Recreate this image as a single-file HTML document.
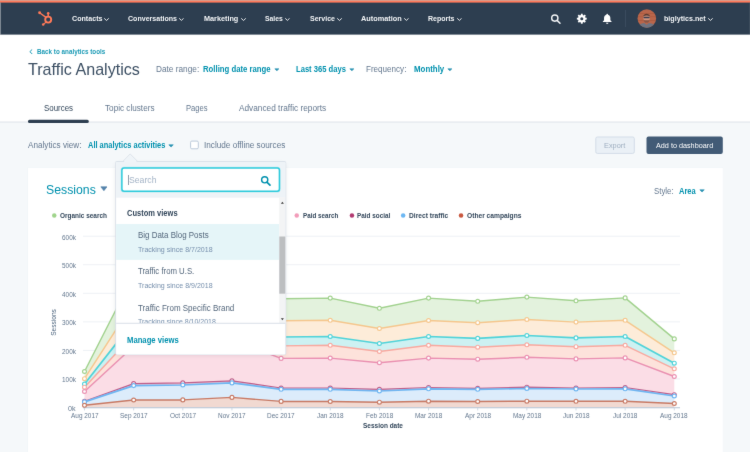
<!DOCTYPE html>
<html><head><meta charset="utf-8"><title>Traffic Analytics</title>
<style>
html,body{margin:0;padding:0;width:750px;height:452px;overflow:hidden}
body{width:750px;height:452px;overflow:hidden;background:#f5f8fa;position:relative;font-family:"Liberation Sans",sans-serif}
#clip{position:absolute;left:0;top:0;width:750px;height:452px;overflow:hidden}
#w{position:absolute;left:-20px;top:-20px;width:790px;height:492px;overflow:hidden;filter:url(#soft)}
#c{position:absolute;left:20px;top:20px;width:750px;height:452px}
.abs{position:absolute;display:block}
.t{position:absolute;white-space:nowrap;line-height:1;transform-origin:0 50%;display:block}
</style></head>
<body>
<svg width="0" height="0" style="position:absolute"><defs><filter id="soft" x="0" y="0" width="100%" height="100%" color-interpolation-filters="sRGB"><feConvolveMatrix order="3" preserveAlpha="true" edgeMode="duplicate" kernelMatrix="0.00524 0.06192 0.00524 0.06192 0.73137 0.06192 0.00524 0.06192 0.00524"/></filter></defs></svg>
<div id="clip"><div id="w"><div id="c">
<svg class="abs" style="left:-20px;top:-20px" width="790" height="492" viewBox="-20 -20 790 492">
<rect x="-20" y="-20" width="790" height="492" fill="#f5f8fa"/>
<rect x="-20" y="34" width="790" height="87.7" fill="#fff"/>
<rect x="-20" y="121.5" width="790" height="1.1" fill="#e1e6ec"/>
<rect x="-20" y="-20" width="790" height="54.6" fill="#2d3e50"/>
<rect x="-20" y="-20" width="790" height="22.6" fill="#ff7a5c"/>
<rect x="-20" y="-20" width="790" height="21" fill="#d89a88"/>
<rect x="0" y="2.6" width="1" height="32" fill="#fff" opacity="0.42"/>
<rect x="749" y="2.6" width="1" height="32" fill="#fff" opacity="0.08"/>
<rect x="27.6" y="167.5" width="695.3" height="290" fill="#eef2f6"/>
<rect x="28" y="167.8" width="694.8" height="290" fill="#fff"/>
<rect x="28" y="119.85" width="60.8" height="3.2" rx="1.5" fill="#2d3e50"/>
<rect x="595.8" y="137" width="38.5" height="16.4" rx="1.6" fill="#eaf0f6" stroke="#d3dde8" stroke-width="1"/>
<rect x="646.5" y="136.5" width="76.3" height="17.4" rx="2" fill="#425b76"/>
<rect x="190.6" y="141.1" width="7.7" height="7.7" rx="1.2" fill="#fff" stroke="#b5c4d6" stroke-width="0.9"/>
</svg>
<svg class="abs" style="left:34px;top:8px" width="24" height="22" viewBox="34 8 24 22">
<g stroke="#ff7a59" fill="none" stroke-linecap="round">
<circle cx="48.2" cy="19.6" r="3.0" stroke-width="1.9"/>
<path d="M48.2 16.4V13.6" stroke-width="1.5"/>
<path d="M46 17.4L39.9 13" stroke-width="1.35"/>
<path d="M46.2 22L43.4 24.4" stroke-width="1.1"/>
</g>
<circle cx="48.2" cy="13.2" r="1.25" fill="#ff7a59"/>
<circle cx="39.6" cy="12.8" r="1.45" fill="#ff7a59"/>
<circle cx="43.2" cy="24.6" r="1.25" fill="#ff7a59"/>
</svg>
<span class="t" style="left:71.68px;top:14.78px;font-size:8.00px;color:#f3f5f7;font-weight:bold;transform:scaleX(0.8905);">Contacts</span>
<svg class="abs" style="left:103.50px;top:17.65px" width="5.00" height="3.30" viewBox="0 0 5.00 3.30"><path d="M0.5 0.6L2.50 2.50L4.50 0.6" fill="none" stroke="#ffffff" stroke-width="0.90" stroke-linecap="round" stroke-linejoin="round"/></svg>
<span class="t" style="left:128.18px;top:14.78px;font-size:8.00px;color:#f3f5f7;font-weight:bold;transform:scaleX(0.8814);">Conversations</span>
<svg class="abs" style="left:179.00px;top:17.70px" width="4.80" height="3.21" viewBox="0 0 4.80 3.21"><path d="M0.5 0.6L2.40 2.41L4.30 0.6" fill="none" stroke="#ffffff" stroke-width="0.90" stroke-linecap="round" stroke-linejoin="round"/></svg>
<span class="t" style="left:203.88px;top:14.78px;font-size:8.00px;color:#f3f5f7;font-weight:bold;transform:scaleX(0.9072);">Marketing</span>
<svg class="abs" style="left:240.50px;top:17.65px" width="5.00" height="3.30" viewBox="0 0 5.00 3.30"><path d="M0.5 0.6L2.50 2.50L4.50 0.6" fill="none" stroke="#ffffff" stroke-width="0.90" stroke-linecap="round" stroke-linejoin="round"/></svg>
<span class="t" style="left:265.38px;top:14.78px;font-size:8.00px;color:#f3f5f7;font-weight:bold;transform:scaleX(0.8504);">Sales</span>
<svg class="abs" style="left:285.10px;top:17.70px" width="4.80" height="3.20" viewBox="0 0 4.80 3.20"><path d="M0.5 0.6L2.40 2.40L4.30 0.6" fill="none" stroke="#ffffff" stroke-width="0.90" stroke-linecap="round" stroke-linejoin="round"/></svg>
<span class="t" style="left:309.68px;top:14.78px;font-size:8.00px;color:#f3f5f7;font-weight:bold;transform:scaleX(0.8774);">Service</span>
<svg class="abs" style="left:336.50px;top:17.65px" width="5.00" height="3.30" viewBox="0 0 5.00 3.30"><path d="M0.5 0.6L2.50 2.50L4.50 0.6" fill="none" stroke="#ffffff" stroke-width="0.90" stroke-linecap="round" stroke-linejoin="round"/></svg>
<span class="t" style="left:360.98px;top:14.78px;font-size:8.00px;color:#f3f5f7;font-weight:bold;transform:scaleX(0.9154);">Automation</span>
<svg class="abs" style="left:404.00px;top:17.70px" width="4.80" height="3.21" viewBox="0 0 4.80 3.21"><path d="M0.5 0.6L2.40 2.41L4.30 0.6" fill="none" stroke="#ffffff" stroke-width="0.90" stroke-linecap="round" stroke-linejoin="round"/></svg>
<span class="t" style="left:428.38px;top:14.78px;font-size:8.00px;color:#f3f5f7;font-weight:bold;transform:scaleX(0.8760);">Reports</span>
<svg class="abs" style="left:457.00px;top:17.70px" width="4.80" height="3.21" viewBox="0 0 4.80 3.21"><path d="M0.5 0.6L2.40 2.41L4.30 0.6" fill="none" stroke="#ffffff" stroke-width="0.90" stroke-linecap="round" stroke-linejoin="round"/></svg>
<span class="t" style="left:664.38px;top:14.78px;font-size:8.00px;color:#f3f5f7;font-weight:bold;transform:scaleX(0.8929);">biglytics.net</span>
<svg class="abs" style="left:707.90px;top:17.67px" width="4.90" height="3.25" viewBox="0 0 4.90 3.25"><path d="M0.5 0.6L2.45 2.45L4.40 0.6" fill="none" stroke="#ffffff" stroke-width="0.90" stroke-linecap="round" stroke-linejoin="round"/></svg>
<svg class="abs" style="left:549px;top:12px" width="15" height="15" viewBox="549 12 15 15">
<circle cx="554.8" cy="18.1" r="3.15" fill="none" stroke="#f1f3f5" stroke-width="1.4"/>
<path d="M557.3 20.6L560.0 23.3" stroke="#f1f3f5" stroke-width="1.5" stroke-linecap="round"/></svg>
<svg class="abs" style="left:575px;top:12px" width="15" height="15" viewBox="575 12 15 15"><path d="M586.73 17.84L586.73 19.56L585.48 19.65L585.07 20.63L585.89 21.58L584.68 22.79L583.73 21.97L582.75 22.38L582.66 23.63L580.94 23.63L580.85 22.38L579.87 21.97L578.92 22.79L577.71 21.58L578.53 20.63L578.12 19.65L576.87 19.56L576.87 17.84L578.12 17.75L578.53 16.77L577.71 15.82L578.92 14.61L579.87 15.43L580.85 15.02L580.94 13.77L582.66 13.77L582.75 15.02L583.73 15.43L584.68 14.61L585.89 15.82L585.07 16.77L585.48 17.75Z M580.25 18.70a1.55 1.55 0 1 0 3.10 0a1.55 1.55 0 1 0 -3.10 0Z" fill="#fff" fill-rule="evenodd"/></svg>
<svg class="abs" style="left:600px;top:11px" width="15" height="16" viewBox="600 11 15 16"><g transform="translate(607.2 18.9) scale(0.93 0.92) translate(-607.2 -18.7)">
<path d="M607.2 13.2c-0.6 0-0.9 0.4-0.9 0.9c-1.7 0.5-2.5 1.9-2.5 3.7v2.3l-1.3 1.5v0.6h9.4v-0.6l-1.3-1.5v-2.3c0-1.8-0.8-3.2-2.5-3.7c0-0.5-0.3-0.9-0.9-0.9z" fill="#fff"/>
<path d="M605.9 22.9h2.6c0 0.8-0.6 1.3-1.3 1.3s-1.3-0.5-1.3-1.3z" fill="#fff"/></g></svg>
<div class="abs" style="left:625.4px;top:10px;width:1px;height:17px;background:#3a4b5e"></div>
<svg class="abs" style="left:637px;top:9px" width="20" height="20" viewBox="637 9 20 20">
<defs><clipPath id="av"><circle cx="646.8" cy="18.5" r="9.3"/></clipPath></defs>
<g clip-path="url(#av)">
<rect x="637" y="9" width="20" height="20" fill="#b9664b"/>
<rect x="637" y="13" width="20" height="0.6" fill="#a9573d"/><rect x="637" y="16.5" width="20" height="0.6" fill="#a9573d"/><rect x="637" y="20" width="20" height="0.6" fill="#a9573d"/>
<ellipse cx="646.6" cy="18.2" rx="3.2" ry="4.2" fill="#cf947e"/>
<path d="M643.3 16.4c0-3.6 6.6-3.6 6.6 0c-1.6-1.2-5-1.2-6.6 0z" fill="#5b3b30"/>
<rect x="643.6" y="16.7" width="6" height="1.6" rx="0.6" fill="#3b3f52"/>
<path d="M643.5 19.4c1.2 1.2 5 1.2 6.2 0c0 4.6-6.2 4.6-6.2 0z" fill="#8b5443"/>
<path d="M637 29v-2.6c2.5-2.6 6-3.2 7.3-3.3l2.3 1.6l2.3-1.6c1.6 0.1 5 0.7 7.6 3.3v2.6z" fill="#6f7482"/>
</g></svg>
<svg class="abs" style="left:29.1px;top:49.2px" width="4" height="6" viewBox="0 0 4 6"><path d="M2.9 0.7L0.9 2.7L2.9 4.7" fill="none" stroke="#0091ae" stroke-width="0.9" stroke-linecap="round" stroke-linejoin="round"/></svg>
<span class="t" style="left:36.71px;top:47.77px;font-size:7.20px;color:#1a9ab5;font-weight:bold;transform:scaleX(0.8770);">Back to analytics tools</span>
<span class="t" style="left:27.84px;top:60.64px;font-size:16.40px;color:#3d5064;transform:scaleX(0.9829);">Traffic Analytics</span>
<span class="t" style="left:155.66px;top:64.80px;font-size:8.60px;color:#64788f;transform:scaleX(0.9616);">Date range:</span>
<span class="t" style="left:203.35px;top:64.59px;font-size:8.80px;color:#0091ae;font-weight:bold;transform:scaleX(0.8810);">Rolling date range</span>
<svg class="abs" style="left:273.55px;top:67.68px" width="5.70" height="3.63" viewBox="273.55 67.68 5.70 3.63"><path d="M274.40 68.53H278.40L276.40 70.47Z" fill="#2d94b3" stroke="#2d94b3" stroke-width="0.7" stroke-linejoin="round"/></svg>
<span class="t" style="left:296.45px;top:64.59px;font-size:8.80px;color:#0091ae;font-weight:bold;transform:scaleX(0.8649);">Last 365 days</span>
<svg class="abs" style="left:348.75px;top:67.68px" width="5.70" height="3.63" viewBox="348.75 67.68 5.70 3.63"><path d="M349.60 68.53H353.60L351.60 70.47Z" fill="#2d94b3" stroke="#2d94b3" stroke-width="0.7" stroke-linejoin="round"/></svg>
<span class="t" style="left:366.06px;top:64.80px;font-size:8.60px;color:#64788f;transform:scaleX(0.9394);">Frequency:</span>
<span class="t" style="left:414.15px;top:64.59px;font-size:8.80px;color:#0091ae;font-weight:bold;transform:scaleX(0.8962);">Monthly</span>
<svg class="abs" style="left:446.85px;top:67.68px" width="5.70" height="3.63" viewBox="446.85 67.68 5.70 3.63"><path d="M447.70 68.53H451.70L449.70 70.47Z" fill="#2d94b3" stroke="#2d94b3" stroke-width="0.7" stroke-linejoin="round"/></svg>
<span class="t" style="left:43.66px;top:104.40px;font-size:8.60px;color:#33475b;transform:scaleX(0.9197);">Sources</span>
<span class="t" style="left:104.66px;top:104.40px;font-size:8.60px;color:#64788f;transform:scaleX(0.9505);">Topic clusters</span>
<span class="t" style="left:185.56px;top:104.40px;font-size:8.60px;color:#64788f;transform:scaleX(0.8864);">Pages</span>
<span class="t" style="left:239.16px;top:104.40px;font-size:8.60px;color:#64788f;transform:scaleX(0.9630);">Advanced traffic reports</span>
<span class="t" style="left:27.67px;top:140.56px;font-size:8.30px;color:#64788f;transform:scaleX(0.9829);">Analytics view:</span>
<span class="t" style="left:87.96px;top:141.41px;font-size:8.40px;color:#0091ae;font-weight:bold;transform:scaleX(0.8888);">All analytics activities</span>
<svg class="abs" style="left:167.75px;top:143.67px" width="6.10" height="3.86" viewBox="167.75 143.67 6.10 3.86"><path d="M168.60 144.52H173.00L170.80 146.68Z" fill="#2d94b3" stroke="#2d94b3" stroke-width="0.7" stroke-linejoin="round"/></svg>
<span class="t" style="left:203.67px;top:141.06px;font-size:8.30px;color:#64788f;transform:scaleX(0.9862);">Include offline sources</span>
<span class="t" style="left:604.40px;top:141.66px;font-size:7.40px;color:#9fafc1;transform:scaleX(0.9933);">Export</span>
<span class="t" style="left:655.80px;top:141.66px;font-size:7.40px;color:#ffffff;transform:scaleX(0.9798);">Add to dashboard</span>
<span class="t" style="left:45.86px;top:182.87px;font-size:13.60px;color:#0091ae;transform:scaleX(0.9027);">Sessions</span>
<svg class="abs" style="left:99.70px;top:186.16px" width="7.80" height="5.49" viewBox="99.70 186.16 7.80 5.49"><path d="M100.55 187.01H106.65L103.60 190.79Z" fill="#5583aa" stroke="#5583aa" stroke-width="0.7" stroke-linejoin="round"/></svg>
<span class="t" style="left:654.46px;top:187.11px;font-size:8.40px;color:#64788f;transform:scaleX(0.9379);">Style:</span>
<span class="t" style="left:679.26px;top:187.11px;font-size:8.40px;color:#0091ae;font-weight:bold;transform:scaleX(0.8996);">Area</span>
<svg class="abs" style="left:698.95px;top:189.47px" width="6.10" height="3.86" viewBox="698.95 189.47 6.10 3.86"><path d="M699.80 190.32H704.20L702.00 192.48Z" fill="#2d94b3" stroke="#2d94b3" stroke-width="0.7" stroke-linejoin="round"/></svg>
<svg class="abs" style="left:50px;top:212px" width="8" height="8" viewBox="50 212 8 8"><circle cx="54.25" cy="215.4" r="2.25" fill="#9fd48b"/></svg>
<span class="t" style="left:59.73px;top:213.44px;font-size:6.70px;color:#33475b;font-weight:bold;transform:scaleX(0.9655);">Organic search</span>
<svg class="abs" style="left:115px;top:212px" width="8" height="8" viewBox="115 212 8 8"><circle cx="119.75" cy="215.4" r="2.25" fill="#f8c889"/></svg>
<span class="t" style="left:125.23px;top:213.44px;font-size:6.70px;color:#33475b;font-weight:bold;transform:scaleX(0.9260);">Referrals</span>
<svg class="abs" style="left:150px;top:212px" width="8" height="8" viewBox="150 212 8 8"><circle cx="154.15" cy="215.4" r="2.25" fill="#5bd0d6"/></svg>
<span class="t" style="left:159.73px;top:213.44px;font-size:6.70px;color:#33475b;font-weight:bold;transform:scaleX(1.0351);">Social media</span>
<svg class="abs" style="left:204px;top:212px" width="8" height="8" viewBox="204 212 8 8"><circle cx="208.15" cy="215.4" r="2.25" fill="#f9a48f"/></svg>
<span class="t" style="left:213.73px;top:213.44px;font-size:6.70px;color:#33475b;font-weight:bold;transform:scaleX(1.0511);">Email marketing</span>
<svg class="abs" style="left:292px;top:212px" width="8" height="8" viewBox="292 212 8 8"><circle cx="296.75" cy="215.4" r="2.25" fill="#f29cb9"/></svg>
<span class="t" style="left:302.63px;top:213.44px;font-size:6.70px;color:#33475b;font-weight:bold;transform:scaleX(0.9411);">Paid search</span>
<svg class="abs" style="left:347px;top:212px" width="8" height="8" viewBox="347 212 8 8"><circle cx="351.95" cy="215.4" r="2.25" fill="#b23a70"/></svg>
<span class="t" style="left:356.73px;top:213.44px;font-size:6.70px;color:#33475b;font-weight:bold;transform:scaleX(0.9513);">Paid social</span>
<svg class="abs" style="left:399px;top:212px" width="8" height="8" viewBox="399 212 8 8"><circle cx="403.15" cy="215.4" r="2.25" fill="#6cb7f3"/></svg>
<span class="t" style="left:408.63px;top:213.44px;font-size:6.70px;color:#33475b;font-weight:bold;transform:scaleX(0.9958);">Direct traffic</span>
<svg class="abs" style="left:456px;top:212px" width="8" height="8" viewBox="456 212 8 8"><circle cx="461.05" cy="215.4" r="2.25" fill="#c9583f"/></svg>
<span class="t" style="left:466.53px;top:213.44px;font-size:6.70px;color:#33475b;font-weight:bold;transform:scaleX(0.9958);">Other campaigns</span>
<svg class="abs" style="left:0;top:225px" width="750" height="200" viewBox="0 225 750 200"><path d="M83 378.95H680" stroke="#eef1f5" stroke-width="1"/><path d="M83 350.40H680" stroke="#eef1f5" stroke-width="1"/><path d="M83 321.85H680" stroke="#eef1f5" stroke-width="1"/><path d="M83 293.30H680" stroke="#eef1f5" stroke-width="1"/><path d="M83 264.75H680" stroke="#eef1f5" stroke-width="1"/><path d="M83 236.20H680" stroke="#eef1f5" stroke-width="1"/><path d="M84.50 371.50L133.65 275.00L182.80 277.00L231.95 274.00L281.10 298.70L330.25 298.10L379.40 308.30L428.55 298.10L477.70 301.30L526.85 297.10L576.00 300.80L625.15 297.90L674.30 338.90L674.30 352.80L625.15 320.30L576.00 322.10L526.85 319.50L477.70 322.70L428.55 320.50L379.40 328.50L330.25 320.30L281.10 320.80L231.95 301.50L182.80 304.00L133.65 302.40L84.50 378.70Z" fill="#e3f2dd"/><path d="M84.50 378.70L133.65 302.40L182.80 304.00L231.95 301.50L281.10 320.80L330.25 320.30L379.40 328.50L428.55 320.50L477.70 322.70L526.85 319.50L576.00 322.10L625.15 320.30L674.30 352.80L674.30 363.20L625.15 336.50L576.00 337.90L526.85 335.50L477.70 338.40L428.55 336.50L379.40 343.50L330.25 336.50L281.10 337.00L231.95 320.80L182.80 322.80L133.65 321.40L84.50 384.00Z" fill="#fdecd9"/><path d="M84.50 384.00L133.65 321.40L182.80 322.80L231.95 320.80L281.10 337.00L330.25 336.50L379.40 343.50L428.55 336.50L477.70 338.40L526.85 335.50L576.00 337.90L625.15 336.50L674.30 363.20L674.30 368.80L625.15 345.30L576.00 346.70L526.85 344.80L477.70 347.20L428.55 345.30L379.40 351.50L330.25 345.30L281.10 345.90L231.95 329.00L182.80 333.00L133.65 334.40L84.50 387.20Z" fill="#cdf1f2"/><path d="M84.50 387.20L133.65 334.40L182.80 333.00L231.95 329.00L281.10 345.90L330.25 345.30L379.40 351.50L428.55 345.30L477.70 347.20L526.85 344.80L576.00 346.70L625.15 345.30L674.30 368.80L674.30 376.50L625.15 357.90L576.00 358.90L526.85 357.30L477.70 359.20L428.55 358.10L379.40 362.70L330.25 358.10L281.10 358.40L231.95 340.00L182.80 344.00L133.65 346.20L84.50 391.50Z" fill="#fde2db"/><path d="M84.50 391.50L133.65 346.20L182.80 344.00L231.95 340.00L281.10 358.40L330.25 358.10L379.40 362.70L428.55 358.10L477.70 359.20L526.85 357.30L576.00 358.90L625.15 357.90L674.30 376.50L674.30 394.70L625.15 387.50L576.00 388.00L526.85 387.20L477.70 388.30L428.55 387.50L379.40 389.30L330.25 388.00L281.10 388.00L231.95 380.80L182.80 382.90L133.65 383.60L84.50 401.20Z" fill="#fbdde6"/><path d="M84.50 401.20L133.65 383.60L182.80 382.90L231.95 380.80L281.10 388.00L330.25 388.00L379.40 389.30L428.55 387.50L477.70 388.30L526.85 387.20L576.00 388.00L625.15 387.50L674.30 394.70L674.30 396.00L625.15 388.80L576.00 389.00L526.85 388.50L477.70 389.30L428.55 388.80L379.40 391.00L330.25 389.30L281.10 389.30L231.95 382.90L182.80 385.00L133.65 385.60L84.50 401.90Z" fill="#e9c8d8"/><path d="M84.50 401.90L133.65 385.60L182.80 385.00L231.95 382.90L281.10 389.30L330.25 389.30L379.40 391.00L428.55 388.80L477.70 389.30L526.85 388.50L576.00 389.00L625.15 388.80L674.30 396.00L674.30 403.50L625.15 401.30L576.00 401.30L526.85 401.20L477.70 401.50L428.55 401.20L379.40 402.20L330.25 401.50L281.10 401.40L231.95 397.40L182.80 399.90L133.65 400.00L84.50 405.30Z" fill="#dcecfb"/><path d="M84.50 405.30L133.65 400.00L182.80 399.90L231.95 397.40L281.10 401.40L330.25 401.50L379.40 402.20L428.55 401.20L477.70 401.50L526.85 401.20L576.00 401.30L625.15 401.30L674.30 403.50L674.30 407.50L625.15 407.50L576.00 407.50L526.85 407.50L477.70 407.50L428.55 407.50L379.40 407.50L330.25 407.50L281.10 407.50L231.95 407.50L182.80 407.50L133.65 407.50L84.50 407.50Z" fill="#f1d9d1"/><path d="M83 407.80H680" stroke="#b3c2d3" stroke-width="1.1"/><path d="M84.50 407.80v2.6" stroke="#c4d0de" stroke-width="0.8"/><path d="M133.65 407.80v2.6" stroke="#c4d0de" stroke-width="0.8"/><path d="M182.80 407.80v2.6" stroke="#c4d0de" stroke-width="0.8"/><path d="M231.95 407.80v2.6" stroke="#c4d0de" stroke-width="0.8"/><path d="M281.10 407.80v2.6" stroke="#c4d0de" stroke-width="0.8"/><path d="M330.25 407.80v2.6" stroke="#c4d0de" stroke-width="0.8"/><path d="M379.40 407.80v2.6" stroke="#c4d0de" stroke-width="0.8"/><path d="M428.55 407.80v2.6" stroke="#c4d0de" stroke-width="0.8"/><path d="M477.70 407.80v2.6" stroke="#c4d0de" stroke-width="0.8"/><path d="M526.85 407.80v2.6" stroke="#c4d0de" stroke-width="0.8"/><path d="M576.00 407.80v2.6" stroke="#c4d0de" stroke-width="0.8"/><path d="M625.15 407.80v2.6" stroke="#c4d0de" stroke-width="0.8"/><path d="M674.30 407.80v2.6" stroke="#c4d0de" stroke-width="0.8"/><path d="M84.50 371.50L133.65 275.00L182.80 277.00L231.95 274.00L281.10 298.70L330.25 298.10L379.40 308.30L428.55 298.10L477.70 301.30L526.85 297.10L576.00 300.80L625.15 297.90L674.30 338.90" fill="none" stroke="#a2d28f" stroke-width="1.45" stroke-linejoin="round"/><path d="M84.50 378.70L133.65 302.40L182.80 304.00L231.95 301.50L281.10 320.80L330.25 320.30L379.40 328.50L428.55 320.50L477.70 322.70L526.85 319.50L576.00 322.10L625.15 320.30L674.30 352.80" fill="none" stroke="#f5c78e" stroke-width="1.45" stroke-linejoin="round"/><path d="M84.50 384.00L133.65 321.40L182.80 322.80L231.95 320.80L281.10 337.00L330.25 336.50L379.40 343.50L428.55 336.50L477.70 338.40L526.85 335.50L576.00 337.90L625.15 336.50L674.30 363.20" fill="none" stroke="#51d3d9" stroke-width="1.75" stroke-linejoin="round"/><path d="M84.50 387.20L133.65 334.40L182.80 333.00L231.95 329.00L281.10 345.90L330.25 345.30L379.40 351.50L428.55 345.30L477.70 347.20L526.85 344.80L576.00 346.70L625.15 345.30L674.30 368.80" fill="none" stroke="#f8a9a0" stroke-width="1.45" stroke-linejoin="round"/><path d="M84.50 391.50L133.65 346.20L182.80 344.00L231.95 340.00L281.10 358.40L330.25 358.10L379.40 362.70L428.55 358.10L477.70 359.20L526.85 357.30L576.00 358.90L625.15 357.90L674.30 376.50" fill="none" stroke="#ea90b1" stroke-width="1.45" stroke-linejoin="round"/><path d="M84.50 401.20L133.65 383.60L182.80 382.90L231.95 380.80L281.10 388.00L330.25 388.00L379.40 389.30L428.55 387.50L477.70 388.30L526.85 387.20L576.00 388.00L625.15 387.50L674.30 394.70" fill="none" stroke="#bf5f8a" stroke-width="1.20" stroke-linejoin="round"/><path d="M84.50 401.90L133.65 385.60L182.80 385.00L231.95 382.90L281.10 389.30L330.25 389.30L379.40 391.00L428.55 388.80L477.70 389.30L526.85 388.50L576.00 389.00L625.15 388.80L674.30 396.00" fill="none" stroke="#6eb6f2" stroke-width="1.70" stroke-linejoin="round"/><path d="M84.50 405.30L133.65 400.00L182.80 399.90L231.95 397.40L281.10 401.40L330.25 401.50L379.40 402.20L428.55 401.20L477.70 401.50L526.85 401.20L576.00 401.30L625.15 401.30L674.30 403.50" fill="none" stroke="#c87a65" stroke-width="1.45" stroke-linejoin="round"/><circle cx="84.50" cy="371.50" r="1.95" fill="#fff" stroke="#a2d28f" stroke-width="1.15"/><circle cx="133.65" cy="275.00" r="1.95" fill="#fff" stroke="#a2d28f" stroke-width="1.15"/><circle cx="182.80" cy="277.00" r="1.95" fill="#fff" stroke="#a2d28f" stroke-width="1.15"/><circle cx="231.95" cy="274.00" r="1.95" fill="#fff" stroke="#a2d28f" stroke-width="1.15"/><circle cx="281.10" cy="298.70" r="1.95" fill="#fff" stroke="#a2d28f" stroke-width="1.15"/><circle cx="330.25" cy="298.10" r="1.95" fill="#fff" stroke="#a2d28f" stroke-width="1.15"/><circle cx="379.40" cy="308.30" r="1.95" fill="#fff" stroke="#a2d28f" stroke-width="1.15"/><circle cx="428.55" cy="298.10" r="1.95" fill="#fff" stroke="#a2d28f" stroke-width="1.15"/><circle cx="477.70" cy="301.30" r="1.95" fill="#fff" stroke="#a2d28f" stroke-width="1.15"/><circle cx="526.85" cy="297.10" r="1.95" fill="#fff" stroke="#a2d28f" stroke-width="1.15"/><circle cx="576.00" cy="300.80" r="1.95" fill="#fff" stroke="#a2d28f" stroke-width="1.15"/><circle cx="625.15" cy="297.90" r="1.95" fill="#fff" stroke="#a2d28f" stroke-width="1.15"/><circle cx="674.30" cy="338.90" r="1.95" fill="#fff" stroke="#a2d28f" stroke-width="1.15"/><circle cx="84.50" cy="378.70" r="1.95" fill="#fff" stroke="#f5c78e" stroke-width="1.15"/><circle cx="133.65" cy="302.40" r="1.95" fill="#fff" stroke="#f5c78e" stroke-width="1.15"/><circle cx="182.80" cy="304.00" r="1.95" fill="#fff" stroke="#f5c78e" stroke-width="1.15"/><circle cx="231.95" cy="301.50" r="1.95" fill="#fff" stroke="#f5c78e" stroke-width="1.15"/><circle cx="281.10" cy="320.80" r="1.95" fill="#fff" stroke="#f5c78e" stroke-width="1.15"/><circle cx="330.25" cy="320.30" r="1.95" fill="#fff" stroke="#f5c78e" stroke-width="1.15"/><circle cx="379.40" cy="328.50" r="1.95" fill="#fff" stroke="#f5c78e" stroke-width="1.15"/><circle cx="428.55" cy="320.50" r="1.95" fill="#fff" stroke="#f5c78e" stroke-width="1.15"/><circle cx="477.70" cy="322.70" r="1.95" fill="#fff" stroke="#f5c78e" stroke-width="1.15"/><circle cx="526.85" cy="319.50" r="1.95" fill="#fff" stroke="#f5c78e" stroke-width="1.15"/><circle cx="576.00" cy="322.10" r="1.95" fill="#fff" stroke="#f5c78e" stroke-width="1.15"/><circle cx="625.15" cy="320.30" r="1.95" fill="#fff" stroke="#f5c78e" stroke-width="1.15"/><circle cx="674.30" cy="352.80" r="1.95" fill="#fff" stroke="#f5c78e" stroke-width="1.15"/><circle cx="84.50" cy="384.00" r="1.95" fill="#fff" stroke="#51d3d9" stroke-width="1.15"/><circle cx="133.65" cy="321.40" r="1.95" fill="#fff" stroke="#51d3d9" stroke-width="1.15"/><circle cx="182.80" cy="322.80" r="1.95" fill="#fff" stroke="#51d3d9" stroke-width="1.15"/><circle cx="231.95" cy="320.80" r="1.95" fill="#fff" stroke="#51d3d9" stroke-width="1.15"/><circle cx="281.10" cy="337.00" r="1.95" fill="#fff" stroke="#51d3d9" stroke-width="1.15"/><circle cx="330.25" cy="336.50" r="1.95" fill="#fff" stroke="#51d3d9" stroke-width="1.15"/><circle cx="379.40" cy="343.50" r="1.95" fill="#fff" stroke="#51d3d9" stroke-width="1.15"/><circle cx="428.55" cy="336.50" r="1.95" fill="#fff" stroke="#51d3d9" stroke-width="1.15"/><circle cx="477.70" cy="338.40" r="1.95" fill="#fff" stroke="#51d3d9" stroke-width="1.15"/><circle cx="526.85" cy="335.50" r="1.95" fill="#fff" stroke="#51d3d9" stroke-width="1.15"/><circle cx="576.00" cy="337.90" r="1.95" fill="#fff" stroke="#51d3d9" stroke-width="1.15"/><circle cx="625.15" cy="336.50" r="1.95" fill="#fff" stroke="#51d3d9" stroke-width="1.15"/><circle cx="674.30" cy="363.20" r="1.95" fill="#fff" stroke="#51d3d9" stroke-width="1.15"/><circle cx="84.50" cy="387.20" r="1.95" fill="#fff" stroke="#f8a9a0" stroke-width="1.15"/><circle cx="133.65" cy="334.40" r="1.95" fill="#fff" stroke="#f8a9a0" stroke-width="1.15"/><circle cx="182.80" cy="333.00" r="1.95" fill="#fff" stroke="#f8a9a0" stroke-width="1.15"/><circle cx="231.95" cy="329.00" r="1.95" fill="#fff" stroke="#f8a9a0" stroke-width="1.15"/><circle cx="281.10" cy="345.90" r="1.95" fill="#fff" stroke="#f8a9a0" stroke-width="1.15"/><circle cx="330.25" cy="345.30" r="1.95" fill="#fff" stroke="#f8a9a0" stroke-width="1.15"/><circle cx="379.40" cy="351.50" r="1.95" fill="#fff" stroke="#f8a9a0" stroke-width="1.15"/><circle cx="428.55" cy="345.30" r="1.95" fill="#fff" stroke="#f8a9a0" stroke-width="1.15"/><circle cx="477.70" cy="347.20" r="1.95" fill="#fff" stroke="#f8a9a0" stroke-width="1.15"/><circle cx="526.85" cy="344.80" r="1.95" fill="#fff" stroke="#f8a9a0" stroke-width="1.15"/><circle cx="576.00" cy="346.70" r="1.95" fill="#fff" stroke="#f8a9a0" stroke-width="1.15"/><circle cx="625.15" cy="345.30" r="1.95" fill="#fff" stroke="#f8a9a0" stroke-width="1.15"/><circle cx="674.30" cy="368.80" r="1.95" fill="#fff" stroke="#f8a9a0" stroke-width="1.15"/><circle cx="84.50" cy="391.50" r="1.95" fill="#fff" stroke="#ea90b1" stroke-width="1.15"/><circle cx="133.65" cy="346.20" r="1.95" fill="#fff" stroke="#ea90b1" stroke-width="1.15"/><circle cx="182.80" cy="344.00" r="1.95" fill="#fff" stroke="#ea90b1" stroke-width="1.15"/><circle cx="231.95" cy="340.00" r="1.95" fill="#fff" stroke="#ea90b1" stroke-width="1.15"/><circle cx="281.10" cy="358.40" r="1.95" fill="#fff" stroke="#ea90b1" stroke-width="1.15"/><circle cx="330.25" cy="358.10" r="1.95" fill="#fff" stroke="#ea90b1" stroke-width="1.15"/><circle cx="379.40" cy="362.70" r="1.95" fill="#fff" stroke="#ea90b1" stroke-width="1.15"/><circle cx="428.55" cy="358.10" r="1.95" fill="#fff" stroke="#ea90b1" stroke-width="1.15"/><circle cx="477.70" cy="359.20" r="1.95" fill="#fff" stroke="#ea90b1" stroke-width="1.15"/><circle cx="526.85" cy="357.30" r="1.95" fill="#fff" stroke="#ea90b1" stroke-width="1.15"/><circle cx="576.00" cy="358.90" r="1.95" fill="#fff" stroke="#ea90b1" stroke-width="1.15"/><circle cx="625.15" cy="357.90" r="1.95" fill="#fff" stroke="#ea90b1" stroke-width="1.15"/><circle cx="674.30" cy="376.50" r="1.95" fill="#fff" stroke="#ea90b1" stroke-width="1.15"/><circle cx="84.50" cy="401.20" r="1.95" fill="#fff" stroke="#bf5f8a" stroke-width="1.15"/><circle cx="133.65" cy="383.60" r="1.95" fill="#fff" stroke="#bf5f8a" stroke-width="1.15"/><circle cx="182.80" cy="382.90" r="1.95" fill="#fff" stroke="#bf5f8a" stroke-width="1.15"/><circle cx="231.95" cy="380.80" r="1.95" fill="#fff" stroke="#bf5f8a" stroke-width="1.15"/><circle cx="281.10" cy="388.00" r="1.95" fill="#fff" stroke="#bf5f8a" stroke-width="1.15"/><circle cx="330.25" cy="388.00" r="1.95" fill="#fff" stroke="#bf5f8a" stroke-width="1.15"/><circle cx="379.40" cy="389.30" r="1.95" fill="#fff" stroke="#bf5f8a" stroke-width="1.15"/><circle cx="428.55" cy="387.50" r="1.95" fill="#fff" stroke="#bf5f8a" stroke-width="1.15"/><circle cx="477.70" cy="388.30" r="1.95" fill="#fff" stroke="#bf5f8a" stroke-width="1.15"/><circle cx="526.85" cy="387.20" r="1.95" fill="#fff" stroke="#bf5f8a" stroke-width="1.15"/><circle cx="576.00" cy="388.00" r="1.95" fill="#fff" stroke="#bf5f8a" stroke-width="1.15"/><circle cx="625.15" cy="387.50" r="1.95" fill="#fff" stroke="#bf5f8a" stroke-width="1.15"/><circle cx="674.30" cy="394.70" r="1.95" fill="#fff" stroke="#bf5f8a" stroke-width="1.15"/><circle cx="84.50" cy="401.90" r="1.95" fill="#fff" stroke="#6eb6f2" stroke-width="1.15"/><circle cx="133.65" cy="385.60" r="1.95" fill="#fff" stroke="#6eb6f2" stroke-width="1.15"/><circle cx="182.80" cy="385.00" r="1.95" fill="#fff" stroke="#6eb6f2" stroke-width="1.15"/><circle cx="231.95" cy="382.90" r="1.95" fill="#fff" stroke="#6eb6f2" stroke-width="1.15"/><circle cx="281.10" cy="389.30" r="1.95" fill="#fff" stroke="#6eb6f2" stroke-width="1.15"/><circle cx="330.25" cy="389.30" r="1.95" fill="#fff" stroke="#6eb6f2" stroke-width="1.15"/><circle cx="379.40" cy="391.00" r="1.95" fill="#fff" stroke="#6eb6f2" stroke-width="1.15"/><circle cx="428.55" cy="388.80" r="1.95" fill="#fff" stroke="#6eb6f2" stroke-width="1.15"/><circle cx="477.70" cy="389.30" r="1.95" fill="#fff" stroke="#6eb6f2" stroke-width="1.15"/><circle cx="526.85" cy="388.50" r="1.95" fill="#fff" stroke="#6eb6f2" stroke-width="1.15"/><circle cx="576.00" cy="389.00" r="1.95" fill="#fff" stroke="#6eb6f2" stroke-width="1.15"/><circle cx="625.15" cy="388.80" r="1.95" fill="#fff" stroke="#6eb6f2" stroke-width="1.15"/><circle cx="674.30" cy="396.00" r="1.95" fill="#fff" stroke="#6eb6f2" stroke-width="1.15"/><circle cx="84.50" cy="405.30" r="1.95" fill="#fff" stroke="#c87a65" stroke-width="1.15"/><circle cx="133.65" cy="400.00" r="1.95" fill="#fff" stroke="#c87a65" stroke-width="1.15"/><circle cx="182.80" cy="399.90" r="1.95" fill="#fff" stroke="#c87a65" stroke-width="1.15"/><circle cx="231.95" cy="397.40" r="1.95" fill="#fff" stroke="#c87a65" stroke-width="1.15"/><circle cx="281.10" cy="401.40" r="1.95" fill="#fff" stroke="#c87a65" stroke-width="1.15"/><circle cx="330.25" cy="401.50" r="1.95" fill="#fff" stroke="#c87a65" stroke-width="1.15"/><circle cx="379.40" cy="402.20" r="1.95" fill="#fff" stroke="#c87a65" stroke-width="1.15"/><circle cx="428.55" cy="401.20" r="1.95" fill="#fff" stroke="#c87a65" stroke-width="1.15"/><circle cx="477.70" cy="401.50" r="1.95" fill="#fff" stroke="#c87a65" stroke-width="1.15"/><circle cx="526.85" cy="401.20" r="1.95" fill="#fff" stroke="#c87a65" stroke-width="1.15"/><circle cx="576.00" cy="401.30" r="1.95" fill="#fff" stroke="#c87a65" stroke-width="1.15"/><circle cx="625.15" cy="401.30" r="1.95" fill="#fff" stroke="#c87a65" stroke-width="1.15"/><circle cx="674.30" cy="403.50" r="1.95" fill="#fff" stroke="#c87a65" stroke-width="1.15"/></svg>
<span class="t" style="left:68.05px;top:405.66px;font-size:6.30px;color:#64788f;transform:scaleX(1.1389);">0k</span>
<span class="t" style="left:61.65px;top:377.16px;font-size:6.30px;color:#64788f;transform:scaleX(1.0232);">100k</span>
<span class="t" style="left:61.65px;top:348.66px;font-size:6.30px;color:#64788f;transform:scaleX(1.0232);">200k</span>
<span class="t" style="left:61.65px;top:320.16px;font-size:6.30px;color:#64788f;transform:scaleX(1.0232);">300k</span>
<span class="t" style="left:61.65px;top:291.66px;font-size:6.30px;color:#64788f;transform:scaleX(1.0232);">400k</span>
<span class="t" style="left:61.65px;top:263.16px;font-size:6.30px;color:#64788f;transform:scaleX(1.0232);">500k</span>
<span class="t" style="left:61.65px;top:234.66px;font-size:6.30px;color:#64788f;transform:scaleX(1.0232);">600k</span>
<span class="t" style="left:70.63px;top:413.16px;font-size:6.30px;color:#64788f;transform:scaleX(1.0240);">Aug 2017</span>
<span class="t" style="left:119.78px;top:413.16px;font-size:6.30px;color:#64788f;transform:scaleX(1.0240);">Sep 2017</span>
<span class="t" style="left:169.64px;top:413.16px;font-size:6.30px;color:#64788f;transform:scaleX(1.0248);">Oct 2017</span>
<span class="t" style="left:218.08px;top:413.16px;font-size:6.30px;color:#64788f;transform:scaleX(1.0240);">Nov 2017</span>
<span class="t" style="left:267.23px;top:413.16px;font-size:6.30px;color:#64788f;transform:scaleX(1.0240);">Dec 2017</span>
<span class="t" style="left:316.91px;top:413.16px;font-size:6.30px;color:#64788f;transform:scaleX(1.0246);">Jan 2018</span>
<span class="t" style="left:365.70px;top:413.16px;font-size:6.30px;color:#64788f;transform:scaleX(1.0242);">Feb 2018</span>
<span class="t" style="left:414.86px;top:413.16px;font-size:6.30px;color:#64788f;transform:scaleX(1.0242);">Mar 2018</span>
<span class="t" style="left:464.54px;top:413.16px;font-size:6.30px;color:#64788f;transform:scaleX(1.0248);">Apr 2018</span>
<span class="t" style="left:512.63px;top:413.16px;font-size:6.30px;color:#64788f;transform:scaleX(1.0237);">May 2018</span>
<span class="t" style="left:562.66px;top:413.16px;font-size:6.30px;color:#64788f;transform:scaleX(1.0246);">Jun 2018</span>
<span class="t" style="left:612.87px;top:413.16px;font-size:6.30px;color:#64788f;transform:scaleX(1.0259);">Jul 2018</span>
<span class="t" style="left:660.43px;top:413.16px;font-size:6.30px;color:#64788f;transform:scaleX(1.0240);">Aug 2018</span>
<span class="t" style="left:362.54px;top:423.19px;font-size:6.60px;color:#33475b;font-weight:bold;transform:scaleX(0.9823);">Session date</span>
<div class="abs" style="left:49px;top:316.5px;width:10px;height:10px"><span class="t" style="left:0;top:0;font-size:6.5px;color:#4a627c;transform-origin:0 0;transform:translate(2.0px,18.8px) rotate(-90deg) scaleX(1.01)">Sessions</span></div>
<div class="abs" style="left:116px;top:163px;width:169px;height:191px;box-shadow:0 1px 5px rgba(45,62,80,0.13);border-radius:2px"></div>
<svg class="abs" style="left:110px;top:150px" width="185" height="210" viewBox="110 150 185 210">
<path d="M122.7 161.7L130.2 154.0L137.9 161.7Z" fill="#f5f8fa" stroke="#dbe2ea" stroke-width="1" stroke-linejoin="round"/>
<rect x="115.2" y="161.1" width="171" height="193.9" rx="1.8" fill="#dbe2ea"/>
<rect x="116.1" y="162" width="169.2" height="192.5" rx="1.2" fill="#fff"/>
<rect x="116.1" y="162" width="169.2" height="35.7" fill="#eef3f7"/>
<path d="M124.1 161.3L130.2 155.1L136.5 161.3V162.6H124.1Z" fill="#eff4f8"/>
<rect x="116.1" y="224" width="163.1" height="35.9" fill="#e5f5f8"/>
<rect x="279.2" y="197.3" width="6.1" height="126" fill="#f3f4f5"/>
<rect x="279.3" y="236.5" width="6" height="57.2" fill="#bcbec0"/>
<rect x="116.1" y="322.8" width="169.2" height="0.9" fill="#d4dce6"/>
<rect x="121.9" y="168" width="157.5" height="23.2" rx="2.2" fill="#fff" stroke="#8fe3ec" stroke-width="2.6" opacity="0.55"/>
<rect x="121.9" y="168" width="157.5" height="23.2" rx="2.2" fill="#fff" stroke="#2fcbdc" stroke-width="1.5"/>
<path d="M280.9 203.7L282.4 201.7L283.9 203.7Z" fill="#3a3a3a"/>
<path d="M280.9 318.3L282.4 320.3L283.9 318.3Z" fill="#3a3a3a"/>
</svg>
<svg class="abs" style="left:127px;top:174px" width="3" height="12" viewBox="0 0 3 12"><rect x="1.2" y="1" width="0.75" height="10" fill="#6f7f92"/></svg>
<span class="t" style="left:129.06px;top:175.51px;font-size:8.40px;color:#a3b3c6;transform:scaleX(1.0371);">Search</span>
<svg class="abs" style="left:259px;top:174px" width="14" height="14" viewBox="259 174 14 14">
<circle cx="264.7" cy="179.8" r="3.1" fill="none" stroke="#0091ae" stroke-width="1.4"/>
<path d="M267.1 182.3L270 185.2" stroke="#0091ae" stroke-width="1.7" stroke-linecap="round"/></svg>
<span class="t" style="left:127.17px;top:209.16px;font-size:8.30px;color:#33475b;font-weight:bold;transform:scaleX(0.9066);">Custom views</span>
<span class="t" style="left:137.77px;top:231.06px;font-size:8.30px;color:#54677c;transform:scaleX(0.9577);">Big Data Blog Posts</span>
<span class="t" style="left:137.83px;top:246.88px;font-size:6.80px;color:#7790ad;transform:scaleX(1.0370);">Tracking since 8/7/2018</span>
<span class="t" style="left:137.77px;top:267.06px;font-size:8.30px;color:#54677c;transform:scaleX(0.9390);">Traffic from U.S.</span>
<span class="t" style="left:137.83px;top:283.08px;font-size:6.80px;color:#7790ad;transform:scaleX(1.0370);">Tracking since 8/9/2018</span>
<span class="t" style="left:137.77px;top:303.76px;font-size:8.30px;color:#54677c;transform:scaleX(0.9621);">Traffic From Specific Brand</span>
<div class="abs" style="left:130px;top:314px;width:120px;height:9px;overflow:hidden"><span class="t" style="left:7.83px;top:4.68px;font-size:6.80px;color:#7790ad;transform:scaleX(1.0288);">Tracking since 8/10/2018</span></div>
<span class="t" style="left:127.37px;top:335.56px;font-size:8.30px;color:#0091ae;font-weight:bold;transform:scaleX(0.9262);">Manage views</span>
</div></div></div>
</body></html>
